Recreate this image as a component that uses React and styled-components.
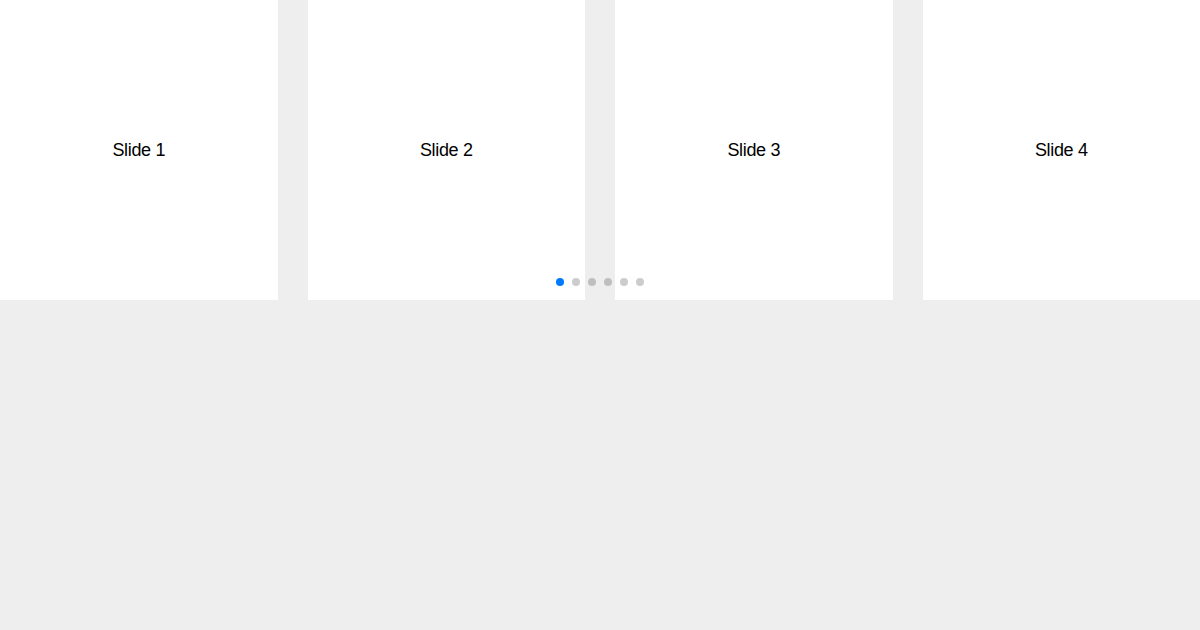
import React from "react";
import styled, { createGlobalStyle } from "styled-components";

const GlobalStyle = createGlobalStyle`
  html, body {
    margin: 0;
    padding: 0;
    background: #eee;
    font-family: "Liberation Sans", Helvetica, Arial, sans-serif;
    font-size: 14px;
    color: #000;
  }
`;

const Swiper = styled.div`
  position: relative;
  width: 100%;
  height: 300px;
  overflow: hidden;
`;

const Wrapper = styled.div`
  display: flex;
  gap: 30px;
  height: 100%;
`;

const Slide = styled.div`
  flex: 1 1 0;
  min-width: 0;
  display: flex;
  align-items: center;
  justify-content: center;
  background: #fff;
  font-size: 18px;
  letter-spacing: -0.35px;
  text-align: center;
`;

const Pagination = styled.div`
  position: absolute;
  left: 0;
  right: 0;
  bottom: 14px;
  display: flex;
  justify-content: center;
  gap: 8px;
`;

const Bullet = styled.span`
  width: 8px;
  height: 8px;
  border-radius: 50%;
  background: ${(props) => (props.$active ? "#007aff" : "#000")};
  opacity: ${(props) => (props.$active ? 1 : 0.2)};
`;

const slides = ["Slide 1", "Slide 2", "Slide 3", "Slide 4"];

const App = () => {
  return (
    <>
      <GlobalStyle />
      <Swiper>
        <Wrapper>
          {slides.map((s) => (
            <Slide key={s}>{s}</Slide>
          ))}
        </Wrapper>
        <Pagination>
          {[0, 1, 2, 3, 4, 5].map((i) => (
            <Bullet key={i} $active={i === 0} />
          ))}
        </Pagination>
      </Swiper>
    </>
  );
};

export default App;
